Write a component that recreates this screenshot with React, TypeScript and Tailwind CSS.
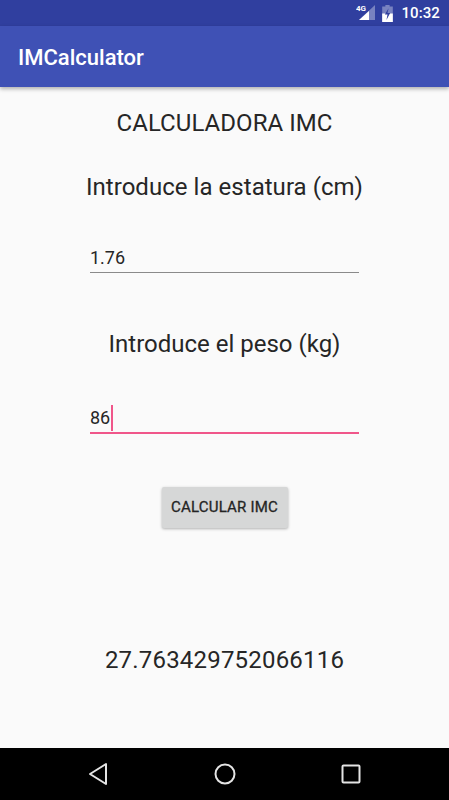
export default function App() {
  return (
    <div className="w-[449px] h-[800px] flex flex-col bg-[#fafafa] overflow-hidden text-[#262626]" style={{ fontFamily: 'Roboto, sans-serif' }}>
      <div className="h-[26px] bg-[#303f9f] flex items-center justify-end pr-[9px] shrink-0">
        <svg width="20" height="18" viewBox="0 0 20 18" className="mr-[6px] mt-[-3px]">
          <polygon points="19,2 19,17 3,17" fill="#fff" fillOpacity="0.35" />
          <polygon points="13,8 13,17 3,17" fill="#fff" />
          <text x="0" y="7.5" fontSize="8" fontWeight="700" fill="#fff" fontFamily="Roboto, sans-serif">4G</text>
        </svg>
        <svg width="11" height="17" viewBox="0 0 10 16" className="mr-[8px]">
          <path d="M3 0h4v1.5h3V16H0V1.5h3z" fill="#fff" fillOpacity="0.35" />
          <path d="M0 8h10v8H0z" fill="#fff" />
          <path d="M6 3 2.5 9H5l-1 5 3.5-6.5H5z" fill="#303f9f" />
        </svg>
        <span className="text-[15px] font-medium text-white leading-none tracking-[0.1px]">10:32</span>
      </div>
      <div className="h-[61px] bg-[#3f51b5] flex items-center pl-[18px] shrink-0 shadow-[0_2px_4px_rgba(0,0,0,0.3)] z-10">
        <span className="text-[22px] font-medium text-white relative top-[1px]">IMCalculator</span>
      </div>
      <div className="flex-1 flex flex-col items-center">
        <div className="mt-[22px] text-[24px] leading-[28px] text-center tracking-[0.05px]">CALCULADORA IMC</div>
        <div className="mt-[36px] text-[24px] leading-[28px] text-center tracking-[0.04px]">Introduce la estatura (cm)</div>
        <div className="mt-[40px] w-[269px] h-[32px] border-b border-[#8a8a8a] flex items-end">
          <span className="text-[18px] leading-[28px]">1.76</span>
        </div>
        <div className="mt-[57px] text-[24px] leading-[28px] text-center">Introduce el peso (kg)</div>
        <div className="mt-[44px] w-[269px] h-[32px] border-b-2 border-[#f0568a] flex items-end">
          <span className="text-[18px] leading-[28px]">86</span>
          <span className="w-[2px] h-[26px] ml-[1px] bg-[#f0568a] mb-[1px]" />
        </div>
        <button className="mt-[53px] w-[126px] h-[41px] rounded-[2px] bg-[#d6d7d7] text-[15px] font-normal tracking-[0.2px] [-webkit-text-stroke:0.3px_#212121] shadow-[0_1px_3px_rgba(0,0,0,0.3)]">CALCULAR IMC</button>
        <div className="mt-[118px] text-[24px] leading-[28px] tracking-[0.2px] text-center">27.763429752066116</div>
      </div>
      <div className="h-[52px] bg-black flex items-center pl-[87px] shrink-0">
        <svg width="22" height="24" viewBox="0 0 22 24" fill="none" stroke="#e4e4e4" strokeWidth="2" strokeLinejoin="round">
          <polygon points="19,2 19,22 3,12" />
        </svg>
        <svg width="24" height="24" viewBox="0 0 24 24" fill="none" stroke="#e4e4e4" strokeWidth="2" className="ml-[104px]">
          <circle cx="12" cy="12" r="9.5" />
        </svg>
        <svg width="24" height="24" viewBox="0 0 24 24" fill="none" stroke="#e4e4e4" strokeWidth="2" strokeLinejoin="round" className="ml-[102px]">
          <rect x="3.5" y="3.5" width="17" height="17" rx="1" />
        </svg>
      </div>
    </div>
  );
}
